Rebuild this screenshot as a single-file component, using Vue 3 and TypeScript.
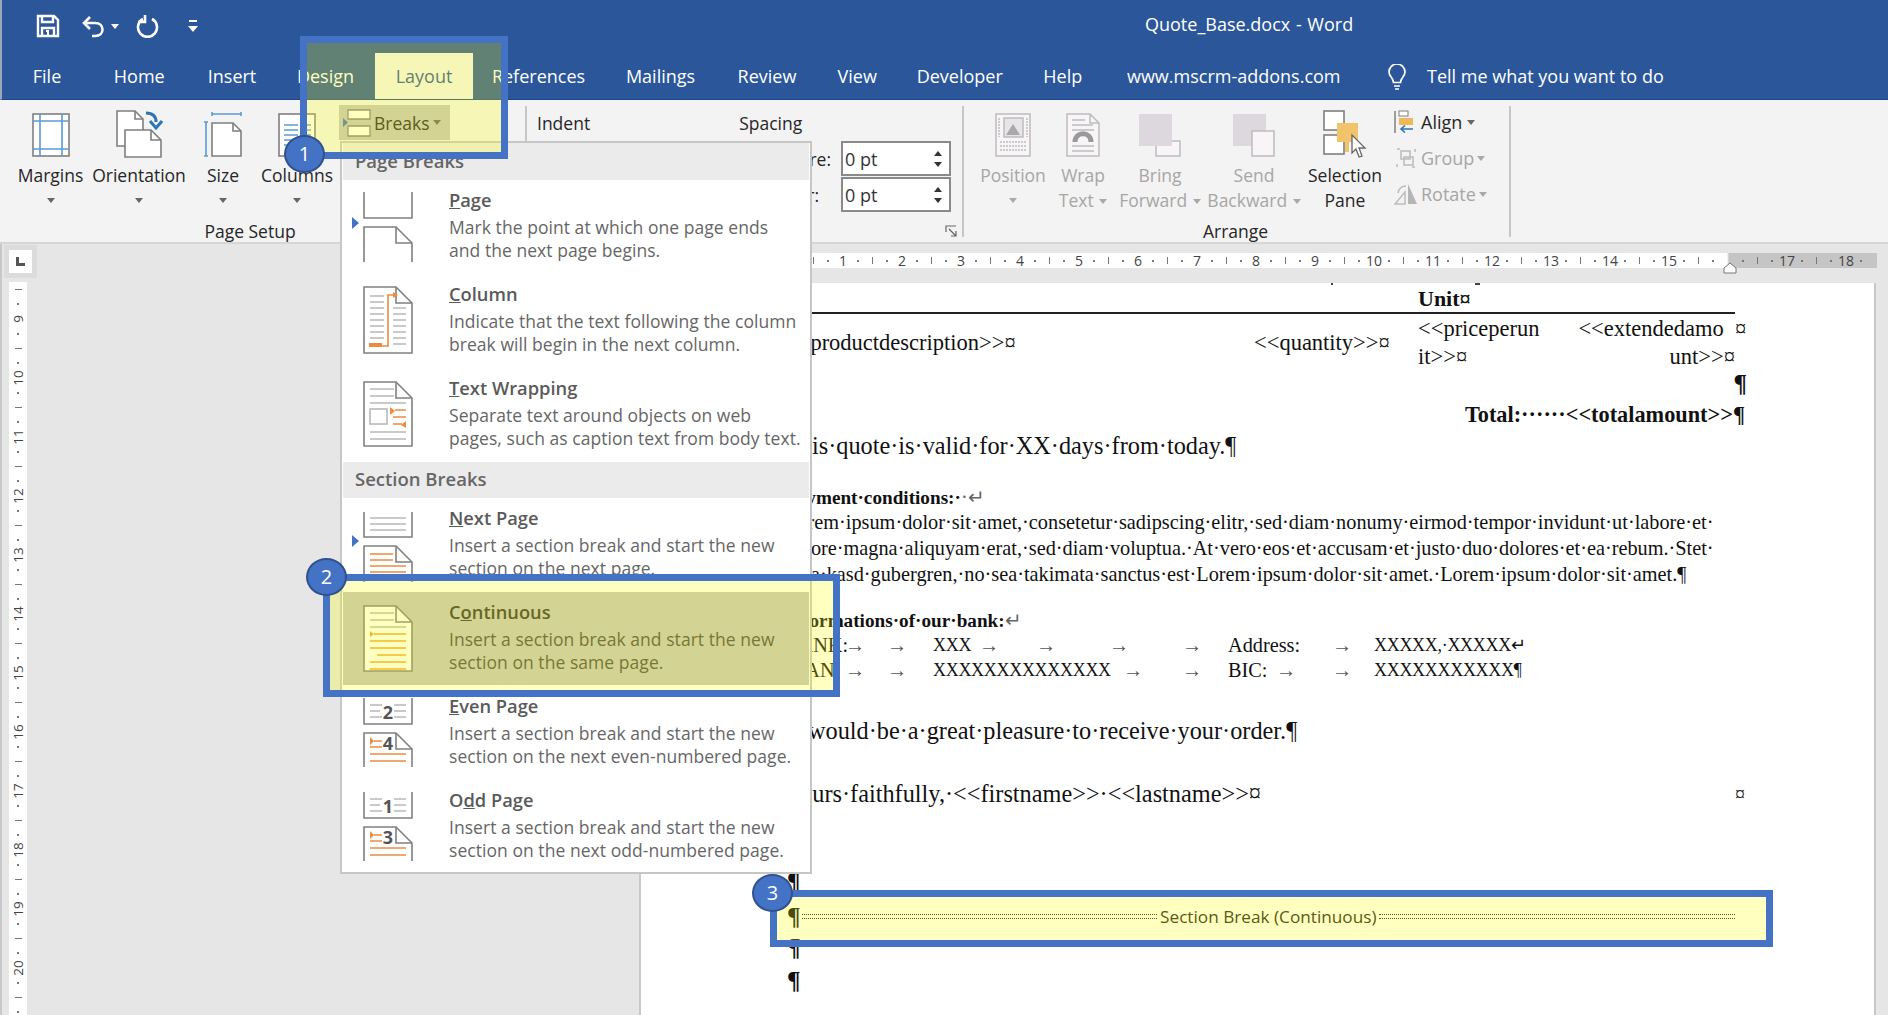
<script setup lang="ts">
interface MenuItem { pre: string; u: string; post: string; l1: string; l2: string; icon: string; mark?: boolean; hot?: boolean }
const tabs = [
  { t: 'File', w: 87 }, { t: 'Home', w: 97.5 }, { t: 'Insert', w: 88 }, { t: 'Design', w: 99 },
  { t: 'Layout', w: 98 }, { t: 'References', w: 131 }, { t: 'Mailings', w: 113 }, { t: 'Review', w: 100 },
  { t: 'View', w: 80.5 }, { t: 'Developer', w: 124.5 }, { t: 'Help', w: 81.5 }, { t: 'www.mscrm-addons.com', w: 260.5 }
]
const pageItems: MenuItem[] = [
  { pre: '', u: 'P', post: 'age', l1: 'Mark the point at which one page ends', l2: 'and the next page begins.', icon: 'page', mark: true },
  { pre: '', u: 'C', post: 'olumn', l1: 'Indicate that the text following the column', l2: 'break will begin in the next column.', icon: 'column' },
  { pre: '', u: 'T', post: 'ext Wrapping', l1: 'Separate text around objects on web', l2: 'pages, such as caption text from body text.', icon: 'wrap' }
]
const sectionItems: MenuItem[] = [
  { pre: '', u: 'N', post: 'ext Page', l1: 'Insert a section break and start the new', l2: 'section on the next page.', icon: 'next', mark: true },
  { pre: 'C', u: 'o', post: 'ntinuous', l1: 'Insert a section break and start the new', l2: 'section on the same page.', icon: 'cont', hot: true },
  { pre: '', u: 'E', post: 'ven Page', l1: 'Insert a section break and start the new', l2: 'section on the next even-numbered page.', icon: 'even' },
  { pre: 'O', u: 'd', post: 'd Page', l1: 'Insert a section break and start the new', l2: 'section on the next odd-numbered page.', icon: 'odd' }
]
const hCells = Array.from({ length: 74 }, (_, i) => {
  if (i % 4 === 0) return { k: 'd', v: i === 0 || i === 64 ? '' : String(i / 4) }
  if (i % 4 === 2) return { k: 't', v: '' }
  return { k: 'p', v: '' }
})
const vCells = Array.from({ length: 50 }, (_, i) => {
  if (i % 4 === 2) return { k: 'd', v: String(9 + (i - 2) / 4) }
  if (i % 4 === 0) return { k: 't', v: '' }
  return { k: 'p', v: '' }
})
const bank1 = [
  { t: 'BANK:', w: 60 }, { t: '→', w: 42, a: true }, { t: '→', w: 46, a: true }, { t: 'XXX', w: 46 },
  { t: '→', w: 57, a: true }, { t: '→', w: 73, a: true }, { t: '→', w: 73, a: true }, { t: '→', w: 46, a: true },
  { t: 'Address:', w: 104 }, { t: '→', w: 42, a: true }, { t: 'XXXXX,·XXXXX↵', w: 200 }
]
const bank2 = [
  { t: 'IBAN', w: 60 }, { t: '→', w: 42, a: true }, { t: '→', w: 46, a: true }, { t: 'XXXXXXXXXXXXXX', w: 190 },
  { t: '→', w: 59, a: true }, { t: '→', w: 46, a: true }, { t: 'BIC:', w: 48 }, { t: '→', w: 56, a: true },
  { t: '→', w: 42, a: true }, { t: 'XXXXXXXXXXX¶', w: 200 }
]
</script>

<template>
  <div class="app">
    <header class="title">
      <div class="qat">
        <svg class="q-save" width="24" height="24" viewBox="0 0 24 24" fill="none" stroke="#fff" stroke-width="2.4"><path d="M2 2H18L22 6V22H2Z"/><path d="M6 2V8H17V2"/><path d="M6 22V14H18V22"/><path d="M10 17H12V22" stroke-width="2"/></svg>
        <svg class="q-undo" width="24" height="23" viewBox="0 0 24 23" fill="none" stroke="#fff" stroke-width="2.6"><path d="M9 2L3 8L9 14"/><path d="M3 8H14C24 8 24 21 14 21H11"/></svg>
        <span class="tri w q-c"></span>
        <svg class="q-redo" width="24" height="24" viewBox="0 0 24 24" fill="none" stroke="#fff" stroke-width="2.6"><path d="M8 5A9.5 9.5 0 1 0 17 5"/><path d="M10 1V8H3"/></svg>
        <svg class="q-more" width="10" height="14" viewBox="0 0 10 14" fill="#fff"><rect x="1" y="1" width="8" height="2"/><path d="M0 7H10L5 13Z"/></svg>
      </div>
      <div class="doc-name">Quote_Base.docx   -   Word</div>
    </header>
    <nav class="tabs">
      <div v-for="t in tabs" :key="t.t" class="tab" :class="{ on: t.t === 'Layout' }" :style="{ width: t.w + 'px' }">{{ t.t }}</div>
      <svg class="bulb" width="20" height="26" viewBox="0 0 20 26" fill="none" stroke="#fff" stroke-width="1.7"><path d="M6.5 18.5C6.5 14 2 12.5 2 8A8 8 0 0 1 18 8C18 12.500 13.500 14 13.500 18.500Z"/><path d="M7 22H13M8 25H12"/></svg>
      <div class="tell">Tell me what you want to do</div>
    </nav>

    <section class="ribbon">
      <div class="group g-setup">
        <div class="cells">
          <div class="cell" style="width:89px">
            <svg class="ic" width="38" height="46" viewBox="0 0 38 46" fill="#fff"><rect x="1" y="3" width="36" height="42" stroke="#7f7f7f" stroke-width="1.6"/><path d="M8 3V45M30 3V45M1 10H37M1 38H37" stroke="#5b9bd5" stroke-width="1.6" fill="none"/></svg>
            <div class="lab">Margins</div><span class="tri"></span>
          </div>
          <div class="cell" style="width:88px">
            <svg class="ic" width="48" height="48" viewBox="0 0 48 48" fill="#fff" stroke="#7f7f7f" stroke-width="1.6"><path d="M2 1H20L28 9V36H2Z"/><path d="M20 1V9H28" fill="none"/><path d="M10 20H36L46 30V47H10Z"/><path d="M36 20V30H46" fill="none"/><path d="M31 3C38 3 41 6 41 12" fill="none" stroke="#2e75b6" stroke-width="3"/><path d="M35 11L41 18L47 11" fill="none" stroke="#2e75b6" stroke-width="3"/></svg>
            <div class="lab">Orientation</div><span class="tri"></span>
          </div>
          <div class="cell" style="width:80px">
            <svg class="ic" width="38" height="46" viewBox="0 0 38 46" fill="#fff" stroke="#7f7f7f" stroke-width="1.6"><path d="M8 12H29L37 20V45H8Z"/><path d="M29 12V20H37" fill="none"/><path d="M8 3H37M8 1V5M37 1V5M2 11V45M0 11H4M0 45H4" stroke="#5b9bd5" fill="none"/></svg>
            <div class="lab">Size</div><span class="tri"></span>
          </div>
          <div class="cell" style="width:68px">
            <svg class="ic" width="38" height="46" viewBox="0 0 38 46" fill="#fff"><rect x="1" y="3" width="36" height="42" stroke="#7f7f7f" stroke-width="1.6"/><path d="M6 14H20M6 19H20M6 24H20M6 29H20M6 34H20M24 14H33M24 19H33M24 24H33M24 29H33M24 34H33" stroke="#5b9bd5" stroke-width="1.5"/></svg>
            <div class="lab">Columns</div><span class="tri"></span>
          </div>
          <div class="side">
            <div class="breaks">
              <svg width="28" height="28" viewBox="0 0 28 28" fill="#fff" stroke="#808080" stroke-width="1.3"><path d="M5 1V10H27V1Z"/><path d="M5 17H27V27H5Z"/><path d="M0 9L5 13.500L0 18Z" fill="#4472c4" stroke="none"/></svg>
              <span>Breaks</span><span class="tri"></span>
            </div>
          </div>
        </div>
        <div class="g-label setup-label">Page Setup</div>
      </div>
      <div class="sep"></div>
      <div class="group g-para">
        <div class="para-head"><span>Indent</span><span class="sp">Spacing</span></div>
        <div class="spin-row"><span class="sl">Before:</span><div class="spin"><span>0 pt</span><span class="arrows"><i class="up"></i><i class="dn"></i></span></div></div>
        <div class="spin-row two"><span class="sl">After:</span><div class="spin"><span>0 pt</span><span class="arrows"><i class="up"></i><i class="dn"></i></span></div></div>
        <svg class="launch" width="12" height="12" viewBox="0 0 12 12" fill="none" stroke="#666" stroke-width="1.2"><path d="M1 7V1H11M4 4L11 11M11 6V11H6"/></svg>
      </div>
      <div class="sep"></div>
      <div class="group g-arr">
        <div class="cells">
          <div class="cell off" style="width:78px">
            <svg class="ic" width="38" height="46" viewBox="0 0 38 46" fill="#f8f4f8" stroke="#bdbdbd" stroke-width="1.5"><rect x="2" y="3" width="34" height="42"/><rect x="10" y="7" width="19" height="19" fill="#e8e4e8"/><path d="M12 24L19 13L26 24Z" fill="#a9a9a9" stroke="none"/><path d="M5 7V26M33 7V26M6 31H32M6 35H32M6 39H32" fill="none" stroke-dasharray="2 1"/></svg>
            <div class="lab">Position</div><span class="tri"></span>
          </div>
          <div class="cell off" style="width:62px">
            <svg class="ic" width="36" height="46" viewBox="0 0 36 46" fill="#f8f4f8" stroke="#bdbdbd" stroke-width="1.5"><path d="M2 3H25L34 12V45H2Z"/><path d="M25 3V12H34M7 9H20M7 14H28M7 19H29M7 35H29M7 40H29" fill="none"/><path d="M10 31C10 20 26 20 26 31" fill="none" stroke="#999" stroke-width="5"/></svg>
            <div class="lab">Wrap</div><div class="lab">Text <span class="tri in"></span></div>
          </div>
          <div class="cell off" style="width:92px">
            <svg class="ic" width="44" height="46" viewBox="0 0 44 46" fill="none"><path d="M20 30H42V45H18V34" stroke="#bdbdbd" stroke-width="1.5" fill="#f8f4f8"/><rect x="1" y="3" width="33" height="32" fill="#ddd8dd"/></svg>
            <div class="lab">Bring</div><div class="lab">Forward <span class="tri in"></span></div>
          </div>
          <div class="cell off" style="width:96px">
            <svg class="ic" width="44" height="46" viewBox="0 0 44 46" fill="none"><rect x="1" y="3" width="33" height="32" fill="#ddd8dd"/><rect x="20" y="20" width="22" height="25" stroke="#bdbdbd" stroke-width="1.5" fill="#f8f4f8"/></svg>
            <div class="lab">Send</div><div class="lab">Backward <span class="tri in"></span></div>
          </div>
          <div class="cell" style="width:86px">
            <svg class="ic" width="44" height="48" viewBox="0 0 44 48" fill="#fff" stroke="#7f7f7f" stroke-width="1.6"><rect x="1" y="1" width="20" height="19"/><rect x="1" y="25" width="20" height="19"/><path d="M14 13H35V32H26V42H22V32H14Z" fill="#f1c36a" stroke="none"/><path d="M29 25V43L33 39L36 47L39 46L36 38H42Z" stroke="#666" stroke-width="1.3"/></svg>
            <div class="lab">Selection</div><div class="lab">Pane</div>
          </div>
          <div class="side-small">
            <div class="small">
              <svg width="22" height="24" viewBox="0 0 22 24" fill="none"><path d="M1 1V23" stroke="#7f7f7f" stroke-width="1.5"/><rect x="5" y="1" width="9" height="5" stroke="#7f7f7f" fill="#fff"/><rect x="5" y="8" width="14" height="7" fill="#eeb959"/><path d="M19 19H7M11 15.500L7 19L11 22.500" stroke="#2e75b6" stroke-width="1.6"/></svg>
              <span>Align</span><span class="tri"></span>
            </div>
            <div class="small off">
              <svg width="24" height="24" viewBox="0 0 24 24" fill="none" stroke="#bdbdbd" stroke-width="1.6"><path d="M3 3H21V21H3Z" stroke-dasharray="3 15"/><rect x="7" y="5" width="9" height="8"/><rect x="10" y="11" width="9" height="8"/></svg>
              <span>Group</span><span class="tri"></span>
            </div>
            <div class="small off">
              <svg width="24" height="24" viewBox="0 0 24 24" fill="none" stroke="#bdbdbd" stroke-width="1.5"><path d="M1 22L11 10V22Z"/><path d="M14 2V22H23Z" fill="#b5b5b5" stroke="none"/><path d="M4 11C5 6 8 4 12 4"/></svg>
              <span>Rotate</span><span class="tri"></span>
            </div>
          </div>
        </div>
        <div class="g-label arr-label">Arrange</div>
      </div>
      <div class="sep"></div>
    </section>

    <main class="work">
      <div class="left">
        <div class="corner"><div class="corner-in"><svg width="11" height="11" viewBox="0 0 11 11" fill="#555"><path d="M1 1H4V7H10V10H1Z"/></svg></div></div>
        <div class="vruler">
          <div v-for="(c, i) in vCells" :key="i" class="vc">
            <span v-if="c.k === 'd'" class="vd">{{ c.v }}</span>
            <i v-else-if="c.k === 't'" class="vt"></i>
            <i v-else class="vp"></i>
          </div>
        </div>
      </div>
      <div class="right">
        <div class="hband">
          <div class="hruler">
            <div v-for="(c, i) in hCells" :key="i" class="hc">
              <span v-if="c.k === 'd'">{{ c.v }}</span>
              <i v-else-if="c.k === 't'" class="ht"></i>
              <i v-else class="hp"></i>
            </div>
            <svg class="indent" width="14" height="12" viewBox="0 0 14 12" fill="#fff" stroke="#777"><path d="M1 11V6L7 1L13 6V11Z"/></svg>
          </div>
        </div>
        <article class="page">
          <div class="cuts"><i></i><i class="b"></i></div>
          <div class="thead"><b>Unit¤</b></div>
          <div class="trow">
            <div class="mid">&lt;&lt;productdescription&gt;&gt;¤</div>
            <div class="mid">&lt;&lt;quantity&gt;&gt;¤</div>
            <div>&lt;&lt;priceperun<br>it&gt;&gt;¤</div>
            <div class="ra">&lt;&lt;extendedamo&nbsp;&nbsp;<br>unt&gt;&gt;¤</div>
            <div class="cm">¤</div>
          </div>
          <div class="end pil">¶</div>
          <div class="end total"><b>Total:······&lt;&lt;totalamount&gt;&gt;¶</b></div>
          <p class="big valid">This·quote·is·valid·for·XX·days·from·today.¶</p>
          <div class="lorem">
            <div><b>Payment·conditions:·</b><span class="sym">·↵</span></div>
            <div>Lorem·ipsum·dolor·sit·amet,·consetetur·sadipscing·elitr,·sed·diam·nonumy·eirmod·tempor·invidunt·ut·labore·et·</div>
            <div>dolore·magna·aliquyam·erat,·sed·diam·voluptua.·At·vero·eos·et·accusam·et·justo·duo·dolores·et·ea·rebum.·Stet·</div>
            <div>clita·kasd·gubergren,·no·sea·takimata·sanctus·est·Lorem·ipsum·dolor·sit·amet.·Lorem·ipsum·dolor·sit·amet.¶</div>
          </div>
          <div class="bank">
            <div><b>Informations·of·our·bank:</b><span class="sym">↵</span></div>
            <div class="bank-row"><span v-for="(c, i) in bank1" :key="i" :class="{ arr: c.a, xs: c.t.startsWith('X') }" :style="{ width: c.w + 'px' }">{{ c.t }}</span></div>
            <div class="bank-row"><span v-for="(c, i) in bank2" :key="i" :class="{ arr: c.a, xs: c.t.startsWith('X') }" :style="{ width: c.w + 'px' }">{{ c.t }}</span></div>
          </div>
          <p class="big would">It·would·be·a·great·pleasure·to·receive·your·order.¶</p>
          <div class="big yours"><span>Yours·faithfully,·&lt;&lt;firstname&gt;&gt;·&lt;&lt;lastname&gt;&gt;¤</span><span class="cm2">¤</span></div>
          <div class="pil p1">¶</div>
          <div class="sect"><span class="pil">¶</span><i class="dots"></i><span class="sb">Section Break (Continuous)</span><i class="dots"></i></div>
          <div class="pil p2">¶</div>
          <div class="pil p3">¶</div>
        </article>
      </div>
    </main>

    <div class="menu">
      <div class="m-head">Page Breaks</div>
      <div v-for="it in pageItems" :key="it.l1" class="m-item">
        <i v-if="it.mark" class="mark"></i>
        <svg class="m-ic" width="50" height="72" viewBox="0 0 50 72" fill="#fff" stroke="#808080" stroke-width="1.6">
          <template v-if="it.icon === 'page'">
            <path d="M1 0V26H49V0" fill="none"/><path d="M1 70V35H33L49 51V70" fill="none"/><path d="M33 35V51H49" fill="none"/>
          </template>
          <template v-else-if="it.icon === 'column'">
            <path d="M1 1H33L49 17V67H1Z"/><path d="M33 1V17H49" fill="none"/>
            <path d="M7 10H21M7 16H21M7 22H21M7 28H21M7 34H21M7 40H21M7 46H21M7 52H21M30 22H43M30 28H43M30 34H43M30 40H43M30 46H43M30 52H43M30 58H43" stroke="#b8b8b8" fill="none"/>
            <path d="M18 60H25V9H31" stroke="#ed8b3f" fill="none"/><rect x="6" y="57" width="13" height="4" fill="#ed8b3f" stroke="none"/><path d="M30 6L35 9L30 12Z" fill="#ed8b3f" stroke="none"/>
          </template>
          <template v-else>
            <path d="M1 2H33L49 18V66H1Z"/><path d="M33 2V18H49" fill="none"/>
            <path d="M7 9H31M7 16H31M7 23H43M7 52H43M7 59H43" stroke="#b8b8b8" fill="none"/>
            <rect x="7" y="29" width="17" height="15" fill="#fff" stroke="#b8b8b8"/>
            <path d="M32 30H43M30 37H43M30 44H39" stroke="#ed8b3f" fill="none"/><path d="M27 27L32 31L27 35Z M43 41L38 45L43 48Z" fill="#ed8b3f" stroke="none"/>
          </template>
        </svg>
        <div class="m-text">
          <div class="m-title">{{ it.pre }}<u>{{ it.u }}</u>{{ it.post }}</div>
          <div class="m-desc">{{ it.l1 }}<br>{{ it.l2 }}</div>
        </div>
      </div>
      <div class="m-head">Section Breaks</div>
      <div v-for="it in sectionItems" :key="it.l2" class="m-item" :class="{ hot: it.hot }">
        <i v-if="it.mark" class="mark"></i>
        <svg class="m-ic" width="50" height="72" viewBox="0 0 50 72" fill="#fff" stroke="#808080" stroke-width="1.6">
          <template v-if="it.icon === 'cont'">
            <path d="M1 2H33L49 18V67H1Z"/><path d="M33 2V18H49" fill="none"/>
            <path d="M7 9H31M7 16H31M7 23H43" stroke="#b8b8b8" fill="none"/>
            <path d="M11 30H43M7 37H43M7 44H43M14 51H43M7 58H43M7 65H43" stroke="#f2a23a" fill="none"/><path d="M7 27L11 30L7 33Z" fill="#f2a23a" stroke="none"/>
          </template>
          <template v-else-if="it.icon === 'next'">
            <path d="M1 2V27H49V2" fill="none"/>
            <path d="M1 72V36H33L49 52V72" fill="none"/><path d="M33 36V52H49" fill="none"/>
            <path d="M7 8H43M7 14H43M7 20H43" stroke="#b8b8b8" fill="none"/>
            <path d="M7 44H30M7 50H30M7 56H43M7 62H43M7 68H43" stroke="#ed8b3f" fill="none"/>
          </template>
          <template v-else>
            <path d="M1 0V26H49V0" fill="none"/>
            <path d="M1 69V35H33L49 51V69" fill="none"/><path d="M33 35V51H49" fill="none"/>
            <path d="M7 7H19M31 7H43M7 13H17M31 13H43M7 19H19M31 19H43" stroke="#b8b8b8" fill="none"/>
            <text x="25" y="21" text-anchor="middle" class="num">{{ it.icon === 'even' ? '2' : '1' }}</text>
            <path d="M11 43H19M7 49H19M7 56H43M7 63H43" stroke="#ed8b3f" fill="none"/><path d="M7 39L11 43L7 47Z" fill="#ed8b3f" stroke="none"/>
            <text x="25" y="52" text-anchor="middle" class="num">{{ it.icon === 'even' ? '4' : '3' }}</text>
          </template>
        </svg>
        <div class="m-text">
          <div class="m-title">{{ it.pre }}<u>{{ it.u }}</u>{{ it.post }}</div>
          <div class="m-desc">{{ it.l1 }}<br>{{ it.l2 }}</div>
        </div>
      </div>
    </div>

    <div class="box b1"></div>
    <div class="box b2"></div>
    <div class="box b3"></div>
    <div class="badge n1">1</div>
    <div class="badge n2">2</div>
    <div class="badge n3">3</div>
  </div>
</template>

<style scoped>
.app { position: relative; width: 1888px; height: 1015px; overflow: hidden; display: flex; flex-direction: column; background: #e6e6e6; font-family: "Open Sans", "Noto Sans", sans-serif; color: #262626; }
.title { height: 53px; background: #2b579a; border-left: 2px solid #9aa7bb; display: flex; position: relative; flex: none; box-sizing: border-box; }
.qat { display: flex; align-items: center; padding-left: 34px; height: 52px; }
.q-undo { margin-left: 21px; }
.q-c { margin-left: 6px; }
.q-redo { margin-left: 16px; }
.q-more { margin-left: 29px; }
.doc-name { position: absolute; left: 1143px; top: 11px; color: #fff; font-size: 18px; line-height: 26px; white-space: pre; word-spacing: 1px; }
.tabs { height: 47px; background: #2b579a; border-left: 2px solid #9aa7bb; display: flex; padding-left: 1.5px; flex: none; align-items: flex-end; box-sizing: border-box; border-bottom: 1px solid #1f4a8a; }
.tab { height: 46px; line-height: 46px; text-align: center; color: #fff; font-size: 18px; flex: none; }
.tab.on { background: #f3f3f3; color: #2b579a; }
.bulb { margin: 0 0 9px 23px; flex: none; }
.tell { color: #fff; font-size: 18px; margin-left: 20px; height: 46px; line-height: 46px; }

.ribbon { height: 144px; flex: none; background: #f3f3f3; border-bottom: 2px solid #d6d6d6; box-sizing: border-box; display: flex; padding-top: 6px; align-items: flex-start; font-size: 17.500px; }
.sep { width: 2px; height: 131px; background: #c6c6c6; flex: none; }
.group { height: 138px; position: relative; flex: none; box-sizing: border-box; }
.g-setup { width: 525px; padding-left: 6px; }
.g-para { width: 435px; }
.g-arr { width: 545px; padding-left: 10px; }
.cells { display: flex; height: 115px; align-items: flex-start; }
.cell { flex: none; display: flex; flex-direction: column; align-items: center; padding-top: 3px; }
.ic { height: 50px; flex: none; }
.lab { line-height: 25px; margin-top: 0; white-space: nowrap; }
.ic + .lab { margin-top: 3.500px; }
.tri { display: inline-block; width: 0; height: 0; border-left: 4.5px solid transparent; border-right: 4.5px solid transparent; border-top: 5px solid #666; flex: none; }
.cell > .tri { margin-top: 10px; }
.tri.in { vertical-align: middle; margin-left: 1px; border-top-color: #a9a9a9; }
.tri.w { border-top-color: #fff; }
.off { color: #a6a6a6; }
.off .tri { border-top-color: #a9a9a9; }
.side { margin-left: 8px; }
.breaks { width: 111px; height: 35px; display: flex; align-items: center; background: #c5c5c5; gap: 3px; padding-left: 4px; box-sizing: border-box; margin-top: -1px; }
.g-label { text-align: center; line-height: 20px; font-size: 17.500px; height: 20px; margin-top: 0; }
.setup-label { padding-right: 31px; }
.arr-label { padding-right: 12px; }
.side-small { margin-left: 8px; display: flex; flex-direction: column; padding-top: 0; margin-top: -2px; }
.small { height: 36px; display: flex; align-items: center; gap: 5px; font-size: 18px; }
.small svg { margin-left: -2px; }
.small.off { gap: 3px; }

.para-head { display: flex; height: 35px; line-height: 34px; padding-left: 10px; }
.sp { margin-left: 149px; }
.spin-row { position: absolute; left: 0; top: 35px; width: 424px; display: flex; justify-content: flex-end; align-items: center; }
.spin-row.two { top: 71px; }
.sl { margin-right: 10px; }
.two .sl { margin-right: 22px; }
.spin { width: 110px; height: 35px; border: 2px solid #8a8a8a; box-sizing: border-box; background: #fff; display: flex; justify-content: space-between; align-items: center; padding: 0 7px 0 2px; font-size: 18px; flex: none; color: #333; }
.arrows { display: flex; flex-direction: column; gap: 6px; }
.arrows i { width: 0; height: 0; border-left: 4px solid transparent; border-right: 4px solid transparent; display: block; }
.arrows .up { border-bottom: 5px solid #333; }
.arrows .dn { border-top: 5px solid #333; }
.launch { position: absolute; left: 418px; top: 119px; }

.work { flex: 1; display: flex; min-height: 0; }
.left { width: 639px; flex: none; padding: 1px 0 0 2px; box-sizing: border-box; border-left: 2px solid #c8c8c8; }
.corner { width: 33px; height: 33px; background: #dcdcdc; padding: 5px; box-sizing: border-box; }
.corner-in { background: #fff; height: 23px; display: flex; align-items: center; justify-content: center; }
.vruler { width: 18px; margin: 4px 0 0 5px; background: #fff; }
.vc { height: 14.750px; display: flex; align-items: center; justify-content: center; }
.vd { font-size: 13.500px; transform: rotate(-90deg); color: #444; line-height: 12px; }
.vt { width: 7px; height: 1.5px; background: #777; }
.vp { width: 2px; height: 2px; background: #777; }
.right { flex: 1; display: flex; flex-direction: column; min-width: 0; padding-right: 11px; }
.hband { height: 39px; flex: none; padding-top: 9px; box-sizing: border-box; }
.hruler { height: 15px; display: flex; padding-left: 137.600px; position: relative; background: linear-gradient(90deg, #fff 1088px, #c5c5c5 1090px); overflow: visible; }
.hc { width: 14.750px; flex: none; display: flex; align-items: center; justify-content: center; font-size: 14px; color: #444; }
.ht { width: 1.5px; height: 7px; background: #777; }
.hp { width: 2px; height: 2px; background: #777; }
.indent { position: absolute; left: 1084px; top: 9px; }
.page { flex: 1; background: #fff; border-left: 2px solid #c8c8c8; border-right: 2px solid #c8c8c8; padding-left: 144px; width: 1237px; box-sizing: border-box; font-family: "Liberation Serif", serif; color: #111; font-size: 20.300px; overflow: hidden; }
.cuts { height: 2px; width: 700px; position: relative; display: flex; gap: 142px; padding-left: 546px; box-sizing: border-box; }
.cuts i { width: 2px; height: 2px; background: #444; }
.cuts i.b { width: 5px; }
.thead { margin-left: 633px; width: 317px; height: 26px; line-height: 26px; font-size: 22px; padding-top: 0; margin-top: 1px; }
.thead::after { content: ""; display: block; width: 923px; height: 2px; background: #222; margin-left: -606px; }
.trow { display: grid; grid-template-columns: 469px 164px 160px 157px 20px; margin-top: 3px; line-height: 28px; font-size: 22.500px; width: 970px; }
.mid { align-self: center; white-space: nowrap; }
.ra { text-align: right; white-space: nowrap; }
.cm { padding-left: 0; }
.end { width: 960px; text-align: right; }
.pil { font-family: "Liberation Serif", serif; font-weight: 700; font-size: 25px; padding-left: 2px; }
.end.pil { line-height: 26px; }
.total { font-size: 22.300px; line-height: 26px; margin-top: 5px; }
.big { font-size: 24.300px; line-height: 28px; margin: 0; }
.valid { margin-top: 4px; }
.lorem { margin-top: 24.500px; line-height: 25.900px; white-space: nowrap; }
.lorem b, .bank b { font-size: 19.200px; }
.sym { color: #666; }
.bank { margin-top: 20px; line-height: 25px; white-space: nowrap; }
.bank-row { display: flex; }
.bank-row span { flex: none; }
.bank-row .xs { font-size: 18px; letter-spacing: -.3px; }
.arr { color: #555; }
.would { margin-top: 33.500px; }
.yours { margin-top: 35px; display: flex; justify-content: space-between; width: 960px; }
.cm2 { font-size: 20px; }
.p1 { margin-top: 59px; line-height: 30px; height: 30px; }
.sect { margin-top: 5px; display: flex; align-items: center; height: 30px; width: 950px; gap: 1px; }
.dots { flex: 1; height: 3px; border-top: 1px dotted #222; border-bottom: 1px dotted #222; }
.sb { font-family: "Open Sans", sans-serif; font-size: 17.200px; color: #222; padding: 0 2px; white-space: nowrap; }
.p2 { margin-top: 1px; line-height: 30px; height: 30px; }
.p3 { margin-top: 3px; line-height: 30px; }

.menu { position: absolute; left: 340px; top: 141px; width: 472px; height: 733px; box-sizing: border-box; background: #fff; border: 2px solid #c6c6c6; padding: 0 1px; }
.m-head { height: 36px; line-height: 33px; background: #ebebeb; font-weight: 600; font-size: 18.500px; color: #666; padding-left: 12px; }
.m-head:first-child { height: 37px; line-height: 36px; }
.m-item { height: 94px; display: flex; position: relative; box-sizing: border-box; overflow: visible; }
.m-item.hot { background: #c5c5c5; height: 93px; margin-bottom: 1px; }
.mark { position: absolute; left: 9px; top: 37px; width: 0; height: 0; border-top: 6px solid transparent; border-bottom: 6px solid transparent; border-left: 7px solid #4472c4; }
.m-ic { margin: 12px 0 0 20px; flex: none; overflow: hidden; }
.num { font: 700 18px "Open Sans", sans-serif; fill: #555; stroke: none; }
.m-text { margin-left: 36px; padding-top: 8px; white-space: nowrap; }
.m-title { font-size: 18.300px; line-height: 24px; font-weight: 600; color: #5a5a5a; }
.m-desc { font-size: 17.500px; line-height: 23.200px; margin-top: 3.500px; color: #666; letter-spacing: .05px; }
.hot .m-title { color: #333; }
.hot .m-desc { color: #4a4a4a; }

.box { position: absolute; box-sizing: border-box; border: 7px solid #4472c4; background: rgba(255, 255, 0, .25); }
.b1 { left: 300px; top: 36px; width: 208px; height: 123px; }
.b2 { left: 323px; top: 574px; width: 517px; height: 123px; }
.b3 { left: 770px; top: 890px; width: 1003px; height: 57px; }
.badge { position: absolute; width: 41px; height: 38px; margin: -19px 0 0 -20px; border-radius: 50%; background: #4472c4; border: 2px solid #2f528f; box-sizing: border-box; color: #fff; font-size: 20px; text-align: center; line-height: 34px; }
.n1 { left: 304px; top: 154px; }
.n2 { left: 326px; top: 577px; }
.n3 { left: 772px; top: 893px; }
</style>
